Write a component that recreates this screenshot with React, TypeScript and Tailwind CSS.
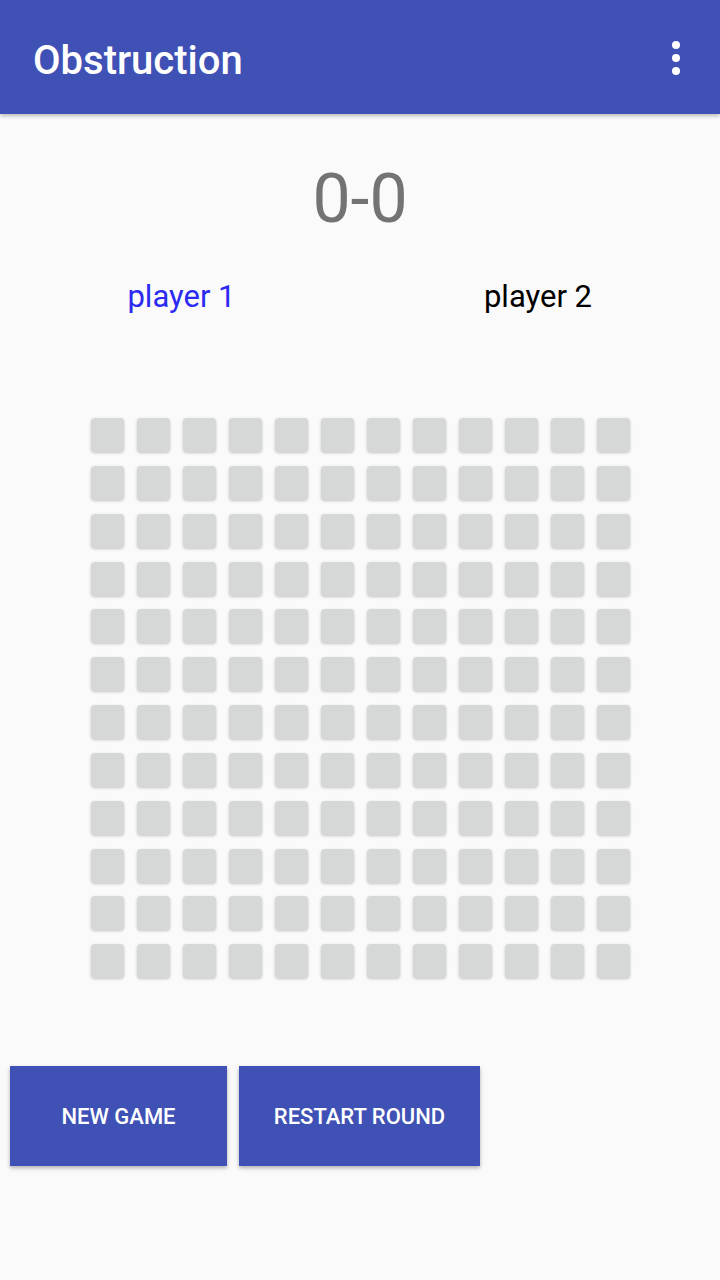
import React from "react";

export default function App() {
  const cells = Array.from({ length: 144 }, (_, i) => i);
  return (
    <div
      className="w-[720px] h-[1280px] bg-[#fafafa] flex flex-col overflow-hidden"
      style={{ fontFamily: "Roboto, 'Noto Sans', sans-serif" }}
    >
      <header className="h-[114px] shrink-0 bg-[#3f51b5] shadow-[0_2px_4px_rgba(0,0,0,0.25)] flex items-center justify-between pl-[33px] pr-[40px] relative z-10">
        <span className="text-[40px] font-medium text-white leading-none mt-[8px]">Obstruction</span>
        <svg width="8" height="34" viewBox="0 0 8 34" className="mt-[1px]">
          <circle cx="4" cy="4" r="4" fill="#ffffff" />
          <circle cx="4" cy="17" r="4" fill="#ffffff" />
          <circle cx="4" cy="30" r="4" fill="#ffffff" />
        </svg>
      </header>

      <div className="mt-[51px] text-center text-[68px] leading-none text-[#737373]">0-0</div>

      <div className="mt-[48px] grid grid-cols-2 text-[31px] leading-none">
        <div className="text-center text-[#2a2af2] pl-[3px]">player 1</div>
        <div className="text-center text-black pr-[4px]">player 2</div>
      </div>

      <div className="mt-[106px] mx-auto grid grid-cols-12 gap-x-[13px] gap-y-[13.85px]">
        {cells.map((i) => (
          <div
            key={i}
            className="w-[33px] h-[34px] rounded-[4px] bg-[#d6d7d7] shadow-[0_1px_3px_rgba(0,0,0,0.22)]"
          />
        ))}
      </div>

      <div className="mt-[88px] flex gap-[12px] pl-[10px]">
        <button className="w-[217px] h-[100px] bg-[#3f51b5] text-white text-[22px] font-medium shadow-[0_2px_4px_rgba(0,0,0,0.3)]">
          NEW GAME
        </button>
        <button className="w-[241px] h-[100px] bg-[#3f51b5] text-white text-[22px] font-medium shadow-[0_2px_4px_rgba(0,0,0,0.3)]">
          RESTART ROUND
        </button>
      </div>
    </div>
  );
}
